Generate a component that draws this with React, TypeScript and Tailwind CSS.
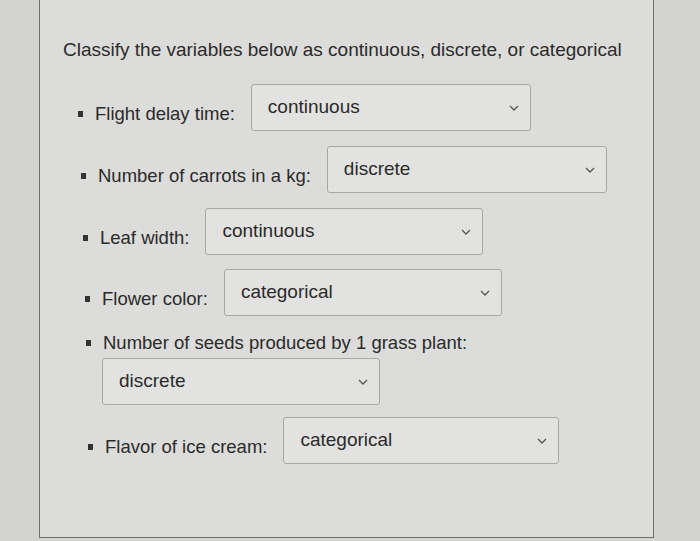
import { ReactNode } from 'react';

interface Item {
  label: string;
  value: string;
  indent: string;
  selectWidth: string;
  stacked?: boolean;
  gapTop: string;
}

const items: Item[] = [
  { label: 'Flight delay time:', value: 'continuous', indent: 'pl-[38px]', selectWidth: 'w-[280px]', gapTop: 'mt-[22px]' },
  { label: 'Number of carrots in a kg:', value: 'discrete', indent: 'pl-[41px]', selectWidth: 'w-[280px]', gapTop: 'mt-[15px]' },
  { label: 'Leaf width:', value: 'continuous', indent: 'pl-[43px]', selectWidth: 'w-[278px]', gapTop: 'mt-[15px]' },
  { label: 'Flower color:', value: 'categorical', indent: 'pl-[45px]', selectWidth: 'w-[278px]', gapTop: 'mt-[14px]' },
  { label: 'Number of seeds produced by 1 grass plant:', value: 'discrete', indent: 'pl-[46px]', selectWidth: 'w-[278px]', stacked: true, gapTop: 'mt-[17px]' },
  { label: 'Flavor of ice cream:', value: 'categorical', indent: 'pl-[48px]', selectWidth: 'w-[276px]', gapTop: 'mt-[12px]' },
];

function Chevron() {
  return (
    <svg width="10" height="6" viewBox="0 0 10 6" className="text-[#555]">
      <path d="M1 1 L5 5 L9 1" fill="none" stroke="currentColor" strokeWidth="1.3" />
    </svg>
  );
}

function FakeSelect({ value, width }: { value: string; width: string }) {
  return (
    <div
      className={`${width} h-[47px] shrink-0 flex items-center justify-between pl-[16px] pr-[11px] rounded-[3px] border border-[#a7a7a5] bg-[#e2e2e0] text-[19px] text-[#2b2b2b]`}
    >
      <span className="-mt-[1px]">{value}</span>
      <Chevron />
    </div>
  );
}

function Bullet({ children }: { children: ReactNode }) {
  return (
    <div className="flex items-center gap-[12px] h-[20px]">
      <span className="w-[5px] h-[6px] bg-[#333] shrink-0" />
      <span className="text-[18.5px] leading-[20px] text-[#2b2b2b] whitespace-nowrap">{children}</span>
    </div>
  );
}

export default function App() {
  return (
    <div
      className="w-[700px] h-[541px] bg-[#d3d3d1] overflow-hidden"
      style={{ fontFamily: '"Liberation Sans", Arial, sans-serif' }}
    >
      <div className="ml-[39px] w-[615px] h-[538px] bg-[#dcdcda] border-x border-b border-[#6f6f6d] pt-[38px]">
        <h1 className="pl-[23px] text-[19px] leading-[24px] text-[#2b2b2b]">
          Classify the variables below as continuous, discrete, or categorical
        </h1>

        <ul className="flex flex-col">
          {items.map((it) =>
            it.stacked ? (
              <li key={it.label} className={`${it.gapTop} ${it.indent} flex flex-col`}>
                <Bullet>{it.label}</Bullet>
                <div className="mt-[5px] pl-[16px]">
                  <FakeSelect value={it.value} width={it.selectWidth} />
                </div>
              </li>
            ) : (
              <li key={it.label} className={`${it.gapTop} ${it.indent} flex items-end gap-[16px]`}>
                <div className="pb-[7px]">
                  <Bullet>{it.label}</Bullet>
                </div>
                <FakeSelect value={it.value} width={it.selectWidth} />
              </li>
            ),
          )}
        </ul>
      </div>
    </div>
  );
}
